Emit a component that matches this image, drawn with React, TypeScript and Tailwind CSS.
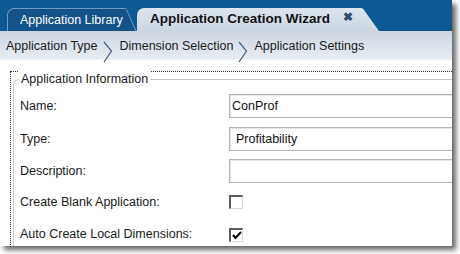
const font = 'font-["Liberation_Sans",Arial,sans-serif]';

function Chevron() {
  return (
    <svg width="12" height="22" viewBox="0 0 12 22" className="mx-[4px] mt-[5px] shrink-0">
      <path d="M2 1 L9.5 10 L2 21" fill="none" stroke="#4d6482" strokeWidth="1.3" />
    </svg>
  );
}

function Row({ label, h, children }: { label: string; h: string; children?: React.ReactNode }) {
  return (
    <div className={`flex items-center ${h}`}>
      <div className="w-[209px] shrink-0 text-[12.5px] text-[#1a1a1a]">{label}</div>
      {children}
    </div>
  );
}

function TextBox({ value, pad = 'pl-[2px]' }: { value?: string; pad?: string }) {
  return (
    <div
      className={`h-[24px] w-[240px] shrink-0 border border-[#b3b3b3] bg-white flex items-center ${pad} text-[12.5px] text-[#111] shadow-[inset_1px_1px_0_#e6e6e6]`}
    >
      {value}
    </div>
  );
}

function CheckBox({ checked }: { checked?: boolean }) {
  return (
    <div className="h-[14px] w-[14px] border-t-2 border-l-2 border-[#5c5c5c] border-r border-b border-r-[#d8d8d8] border-b-[#d8d8d8] bg-white flex items-center justify-center">
      {checked && (
        <svg width="10" height="9" viewBox="0 0 10 9">
          <path d="M1 4 L3.5 7 L9 1" fill="none" stroke="#000" strokeWidth="2" />
        </svg>
      )}
    </div>
  );
}

export default function App() {
  return (
    <div className={`w-[460px] h-[254px] bg-white overflow-hidden ${font}`}>
      <div className="w-[452px] h-[246px] bg-white overflow-hidden flex flex-col shadow-[4px_4px_5px_rgba(0,0,0,0.6)]">
        {/* tab strip */}
        <div className="h-[31px] shrink-0 bg-[#0b5893] flex items-end pl-[7px]">
          <div className="flex h-[23px]">
            <div className="w-[118px] rounded-tl-[7px] bg-[#14538a] border-t border-l border-[#6f9cc6] pl-[12px] pt-[4px] text-[12.5px] text-white leading-[15px]">
              Application Library
            </div>
            <svg width="12" height="23" viewBox="0 0 12 23" className="shrink-0">
              <path d="M0 0 L1 0 L11 23 L0 23 Z" fill="#14538a" />
              <path d="M0.5 0.5 L1 0.5 L11 23" fill="none" stroke="#6f9cc6" strokeWidth="1" />
            </svg>
          </div>
          <div className="flex h-[23px]">
            <div className="w-[223px] rounded-tl-[7px] bg-gradient-to-b from-[#dce5ee] to-[#ccd7e3] pl-[13px] pt-[3px] flex items-start text-[13.5px] font-bold text-[#111] leading-[16px]">
              <span>Application Creation Wizard</span>
              <span className="ml-[13px] text-[12px] text-[#2f4a6a] leading-[13px]">✖</span>
            </div>
            <svg width="20" height="23" viewBox="0 0 20 23" className="shrink-0">
              <defs>
                <linearGradient id="tg" x1="0" y1="0" x2="0" y2="1">
                  <stop offset="0" stopColor="#dce5ee" />
                  <stop offset="1" stopColor="#ccd7e3" />
                </linearGradient>
              </defs>
              <path d="M0 0 L1 0 Q3 0 4 2 L19 23 L0 23 Z" fill="url(#tg)" />
            </svg>
          </div>
        </div>

        {/* breadcrumb */}
        <div className="h-[29px] shrink-0 bg-gradient-to-b from-[#cbd5e1] to-[#e9edf3] border-b border-[#f2f4f7] flex items-start pl-[6px] pt-[5px] text-[12.5px] text-[#1a1a1a] leading-[16px]">
          <span className="pt-[2px]">Application Type</span>
          <Chevron />
          <span className="pt-[2px] ml-[2px]">Dimension Selection</span>
          <Chevron />
          <span className="pt-[2px] ml-[1px]">Application Settings</span>
        </div>

        {/* content */}
        <div className="flex-1 pt-[11px] pl-[10px]">
          <div className="h-full border-t border-l border-dotted border-[#333] pl-[2px] pt-[7px]">
            <div className="h-full border-t border-l border-[#c9c9c9] rounded-tl-[6px] relative pl-[6px]">
              <div className="absolute -top-[9px] left-[5px] bg-white px-[2px] text-[12.5px] text-[#1a1a1a] leading-[16px]">
                Application Information
              </div>
              <div className="pt-[10px] flex flex-col">
                <Row label="Name:" h="h-[32px]">
                  <TextBox value="ConProf" />
                </Row>
                <Row label="Type:" h="h-[34px]">
                  <TextBox value="Profitability" pad="pl-[6px]" />
                </Row>
                <Row label="Description:" h="h-[30px]">
                  <TextBox />
                </Row>
                <Row label="Create Blank Application:" h="h-[32px]">
                  <CheckBox />
                </Row>
                <Row label="Auto Create Local Dimensions:" h="h-[33px]">
                  <CheckBox checked />
                </Row>
              </div>
            </div>
          </div>
        </div>
      </div>
    </div>
  );
}
